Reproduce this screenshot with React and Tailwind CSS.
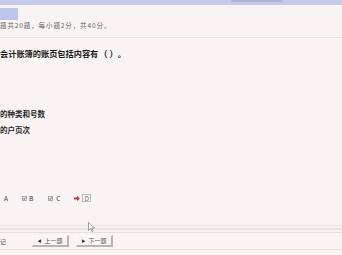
import React from "react";

const font = { fontFamily: '"Noto Sans CJK SC", "Liberation Sans", sans-serif' };

function Check({ red }) {
  if (red) {
    return (
      <svg width="6" height="5" viewBox="0 0 6 5" className="shrink-0">
        <path d="M0 1.5h3V0l3 2.5L3 5V3.5H0z" fill="#d0344a" />
      </svg>
    );
  }
  return (
    <svg width="5" height="5" viewBox="0 0 5 5" className="shrink-0">
      <rect x="0.5" y="0.5" width="4" height="4" fill="none" stroke="#9a9a9a" strokeWidth="0.8" />
      <path d="M1.2 2.5l1 1 1.6-2" fill="none" stroke="#333" strokeWidth="0.8" />
    </svg>
  );
}

function NavButton({ dir, label }) {
  return (
    <div className="flex h-[12px] w-[37px] items-center justify-center gap-[3px] border-t border-l border-t-[#fbfbfb] border-l-[#fbfbfb] border-r-2 border-b-2 border-r-[#b9b5b4] border-b-[#b9b5b4] text-[6px] leading-none text-[#555]">
      <span className="text-[4px] text-[#333]">{dir === "prev" ? "◀" : "▶"}</span>
      <span>{label}</span>
    </div>
  );
}

export default function App() {
  return (
    <div className="relative h-[255px] w-[342px] overflow-hidden bg-[#f8f4f3]" style={font}>
      <div className="h-[5px] bg-[#c5cbe9]">
        <div className="ml-[231px] h-[2px] w-[52px] bg-[#b3b3d9]" />
      </div>
      <div className="h-[15px] pt-[3px]">
        <div className="h-[12px] w-[18px] bg-[#bcc6ea]" />
      </div>
      <div className="h-[11px] text-[6.5px] leading-[11px] tracking-[0.9px] text-[#666]">题共20题，每小题2分，共40分。</div>
      <div className="mt-[6px] h-px bg-[#e7e2e1]" />
      <div className="mt-[10px] flex h-[10px] text-[8.2px] font-bold leading-[10px] text-[#1c1c1c]">
        <span>会计账簿的账页包括内容有</span>
        <span className="ml-[1px]">（</span>
        <span className="ml-[2px]">）</span>
        <span>。</span>
      </div>
      <div className="mt-[51px] h-[10px] text-[7.5px] font-bold leading-[10px] text-[#2a2a2a]">的种类和号数</div>
      <div className="mt-[6px] h-[10px] text-[7.5px] font-bold leading-[10px] text-[#2a2a2a]">的户页次</div>
      <div className="mt-[58px] flex h-[10px] items-center text-[6.5px] leading-none text-[#333]">
        <span className="ml-[4px]">A</span>
        <span className="ml-[14px]"><Check /></span>
        <span className="ml-[2px]">B</span>
        <span className="ml-[15px]"><Check /></span>
        <span className="ml-[3px]">C</span>
        <span className="ml-[14px]"><Check red /></span>
        <span className="ml-[2px] border border-[#bbb] px-px text-[#777]">D</span>
      </div>
      <div className="mt-[22px] h-px bg-[#ece7e6]" />
      <div className="mt-[2px] h-[2px] bg-[#e9e4e3]" />
      <div className="mt-[2px] h-px bg-[#e5e0df]" />
      <div className="flex h-[16px] items-center text-[6px] text-[#555]">
        <span className="w-[32px]">记</span>
        <NavButton dir="prev" label="上一题" />
        <span className="w-[7px]" />
        <NavButton dir="next" label="下一题" />
      </div>
      <div className="h-px bg-[#e6e1e0]" />
      <svg className="absolute left-[88px] top-[222px]" width="7" height="10" viewBox="0 0 7 10">
        <path d="M0.5 0.5v8l2-2 1.5 3 1.2-.6-1.5-2.9H6.5z" fill="#fff" stroke="#777" strokeWidth="0.7" />
      </svg>
    </div>
  );
}
